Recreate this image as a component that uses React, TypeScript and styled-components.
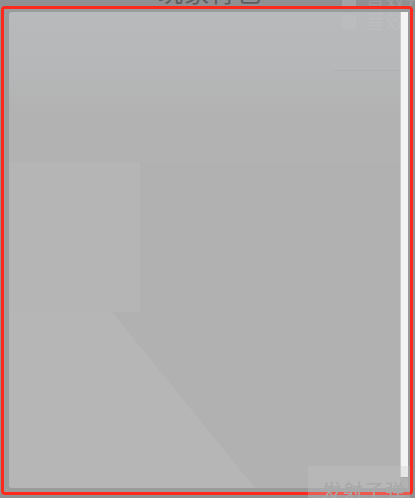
import React from 'react'
import styled, { createGlobalStyle } from 'styled-components'

const GlobalStyle = createGlobalStyle`
  html, body {
    margin: 0;
    padding: 0;
    background: #8f9092;
    font-family: "Noto Sans CJK SC", "Liberation Sans", sans-serif;
  }
`

const Page = styled.div`
  position: relative;
  width: 415px;
  height: 498px;
  overflow: hidden;
  background: #8f9092;
`

const TopBar = styled.div`
  display: flex;
  align-items: flex-start;
  margin-top: -25px;
  padding-left: 158px;
`

const Title = styled.div`
  flex-shrink: 0;
  font-size: 25px;
  line-height: 33px;
  color: #5c5d5f;
  letter-spacing: 1px;
  width: 184px;
`

const Toggles = styled.div`
  flex-shrink: 0;
  display: flex;
  flex-direction: column;
  gap: 8px;
  padding-top: 15px;
`

const Toggle = styled.label`
  display: flex;
  align-items: center;
  gap: 9px;
  font-size: 20px;
  line-height: 20px;
  color: #9d9ea0;
  white-space: nowrap;
  .box {
    width: 14px;
    height: 14px;
    border-radius: 2px;
    background: #a2a3a5;
  }
`

const Frame = styled.div`
  position: absolute;
  left: 1px;
  top: 6px;
  width: 412px;
  height: 489px;
  box-sizing: border-box;
  border: 3px solid #ff2a1c;
  border-radius: 4px;
  background: #9a9b9c;
  padding: 3px 2px 4px 5px;
  display: flex;
`

const Panel = styled.div`
  position: relative;
  flex: 1;
  display: flex;
  border-radius: 3px 0 0 3px;
  overflow: hidden;
  background: #b1b1b1;
`

const Backdrop = styled.svg`
  position: absolute;
  left: 0;
  top: 0;
`

const Content = styled.div`
  flex: 1;
`

const Track = styled.div`
  position: relative;
  width: 8px;
  background: #a9a9a9;
  display: flex;
  flex-direction: column;
`

const Thumb = styled.div`
  height: 466px;
  background: #f4f4f4;
  border-bottom: 1px solid #9c9c9c;
  border-left: 1px solid #c8c8c8;
  box-sizing: border-box;
`

const FireButton = styled.button`
  position: absolute;
  left: 308px;
  top: 466px;
  width: 102px;
  height: 40px;
  border: none;
  padding: 10px 0 0 14px;
  text-align: left;
  background: rgba(200, 200, 200, 0.3);
  color: #a8a8a8;
  font-family: "Noto Sans CJK SC", sans-serif;
  font-size: 20px;
  line-height: 26px;
  letter-spacing: 1px;
`

const App: React.FC = () => {
  return <Page>
    <GlobalStyle />
    <TopBar>
      <Title>玩家背包</Title>
      <Toggles>
        <Toggle><span className='box' />音效开关</Toggle>
      </Toggles>
    </TopBar>
    <Frame>
      <Panel>
        <Backdrop width='391' height='476' viewBox='0 0 391 476'>
          <defs>
            <linearGradient id='topfade' x1='0' y1='0' x2='0' y2='1'>
              <stop offset='0' stopColor='#b8b9ba' />
              <stop offset='0.6' stopColor='#b6b7b8' />
              <stop offset='1' stopColor='#b2b2b2' />
            </linearGradient>
          </defs>
          <rect x='0' y='0' width='391' height='100' fill='url(#topfade)' />
          <rect x='0' y='100' width='391' height='50' fill='#b2b2b2' />
          <rect x='0' y='150' width='131' height='150' fill='#b5b5b5' />
          <polygon points='0,300 103,300 246,476 0,476' fill='#b6b6b6' />
          <rect x='324' y='58' width='67' height='1' fill='#b0b1b2' />
          <rect x='333' y='3' width='14' height='14' rx='2' fill='#bbbcbd' />
          <text x='356' y='17' fontSize='20' fill='#bcbdbe' fontFamily='"Noto Sans CJK SC", sans-serif'>音效</text>
        </Backdrop>
        <Content />
        <Track>
          <Thumb />
        </Track>
      </Panel>
    </Frame>
    <FireButton>发射子弹</FireButton>
  </Page>
}

export default App
